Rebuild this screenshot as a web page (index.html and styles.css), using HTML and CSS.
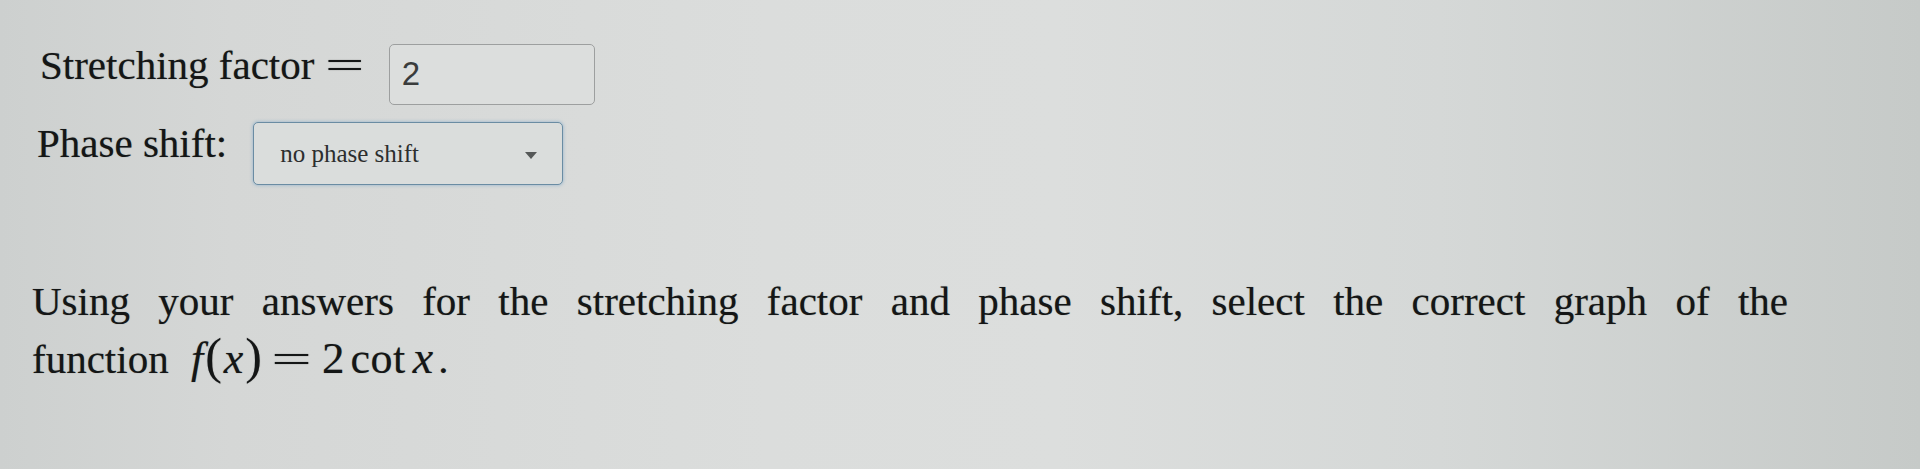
FILE: index.html
```html
<!DOCTYPE html>
<html>
<head>
<meta charset="utf-8">
<link rel="stylesheet" href="styles.css">
</head>
<body>
<div class="page">
  <div class="row row1">
    <span class="label lbl1">Stretching factor <span class="eq">=</span></span>
    <div class="input">2</div>
  </div>
  <div class="row row2">
    <span class="label lbl2">Phase shift:</span>
    <div class="select"><span class="sel-text">no phase shift</span><span class="arrow"></span></div>
  </div>
  <p class="para">Using your answers for the stretching factor and phase shift, select the correct graph of the <span class="nw">function <span class="math"><span class="mi">f</span><span class="paren">(</span><span class="mi">x</span><span class="paren">)</span><span class="meq">=</span><span class="mn">2</span><span class="mop">cot</span><span class="mi mx">x</span><span class="dot">.</span></span></span></p>
</div>
</body>
</html>
```

FILE: styles.css
```css
html, body {
  margin: 0;
  padding: 0;
}
body {
  width: 1920px;
  height: 469px;
  overflow: hidden;
  background: linear-gradient(90deg, #cdd0cf 0%, #d5d7d6 12%, #dbdddc 40%, #dcdedd 55%, #d5d8d7 75%, #c6cac8 100%);
  font-family: "Liberation Serif", "Times New Roman", serif;
  color: #141616;
}
.page {
  padding-top: 44px;
}
.row {
  display: flex;
  align-items: center;
}
.row1 {
  margin-left: 40px;
  gap: 33px;
}
.row2 {
  margin-left: 37px;
  margin-top: 17px;
  gap: 26px;
}
.label {
  font-size: 41px;
  line-height: 41px;
  white-space: nowrap;
  text-shadow: 0 0 1px rgba(0,0,0,0.4);
}
.lbl1 {
  padding-bottom: 19px;
}
.lbl2 {
  padding-bottom: 20px;
}
.eq {
  display: inline-block;
  margin-left: 8px;
  transform: scaleX(1.7);
}
.input {
  box-sizing: border-box;
  width: 206px;
  height: 61px;
  border: 1.5px solid #9d9f9f;
  border-radius: 5px;
  background: #dcdedd;
  padding-left: 12px;
  display: flex;
  align-items: center;
  font-family: "Liberation Sans", Arial, sans-serif;
  font-size: 33px;
  color: #3a3c3c;
  padding-bottom: 1px;
}
.select {
  box-sizing: border-box;
  width: 310px;
  height: 63px;
  border: 1.5px solid #6a8ca3;
  border-radius: 5px;
  box-shadow: 0 0 3px 1px rgba(120, 165, 200, 0.45);
  background: #dadddc;
  padding-left: 26px;
  padding-right: 25px;
  display: flex;
  align-items: center;
  padding-top: 1px;
}
.sel-text {
  flex: 1;
  font-size: 25px;
  color: #2c2e2e;
}
.arrow {
  width: 0;
  height: 0;
  border-left: 6px solid transparent;
  border-right: 6px solid transparent;
  border-top: 7px solid #555858;
  margin-top: 3px;
}
.para {
  margin: 89px 132px 0 32px;
  font-size: 41px;
  line-height: 55px;
  text-align: justify;
  text-shadow: 0 0 1px rgba(0,0,0,0.4);
}
.nw {
  white-space: nowrap;
}
.math {
  margin-left: 12px;
}
.mi {
  font-style: italic;
  font-size: 44px;
}
.paren {
  font-size: 50px;
  font-weight: 300;
  margin: 0 2px;
}
.paren:first-of-type {
  margin-left: 6px;
}
.meq {
  display: inline-block;
  margin: 0 19px 0 16px;
  transform: scaleX(1.75);
}
.mn {
  font-size: 45px;
}
.mop {
  font-size: 44px;
  letter-spacing: 0.5px;
  margin-left: 6px;
  margin-right: 7px;
}
.mx {
  font-size: 46px;
}
.dot {
  margin-left: 5px;
}
```
